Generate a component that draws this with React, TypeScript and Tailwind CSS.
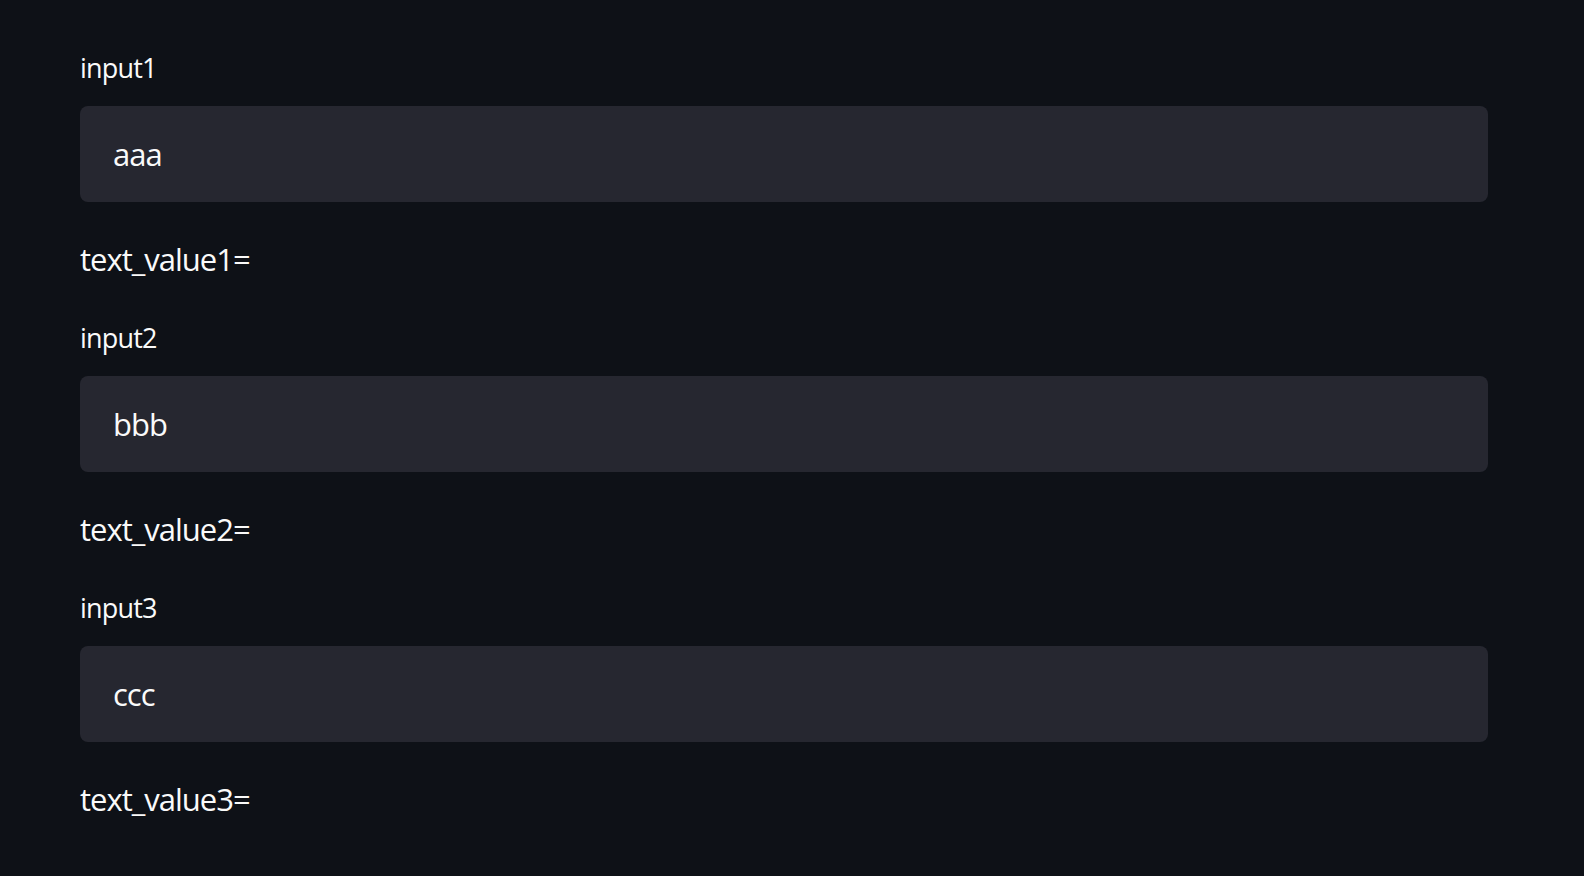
import React from "react";

function Field({ label, value, out }: { label: string; value: string; out: string }) {
  return (
    <div className="flex flex-col">
      <div className="h-[40px] leading-[40px] text-[27px] tracking-[-0.8px]">{label}</div>
      <div className="mt-[18px] h-[96px] w-[1408px] rounded-[8px] bg-[#262730] flex items-center pl-[33px] text-[31px] tracking-[-1px]">
        {value}
      </div>
      <div className="mt-[33px] h-[48px] leading-[48px] text-[31px] tracking-[-1px]">{out}</div>
    </div>
  );
}

export default function App() {
  return (
    <div
      className="min-h-[876px] w-full bg-[#0e1117] text-[#fafafa] pl-[80px] pt-[48px] flex flex-col gap-[35px]"
      style={{ fontFamily: '"Open Sans", "Noto Sans", sans-serif' }}
    >
      <Field label="input1" value="aaa" out="text_value1=" />
      <Field label="input2" value="bbb" out="text_value2=" />
      <Field label="input3" value="ccc" out="text_value3=" />
    </div>
  );
}
